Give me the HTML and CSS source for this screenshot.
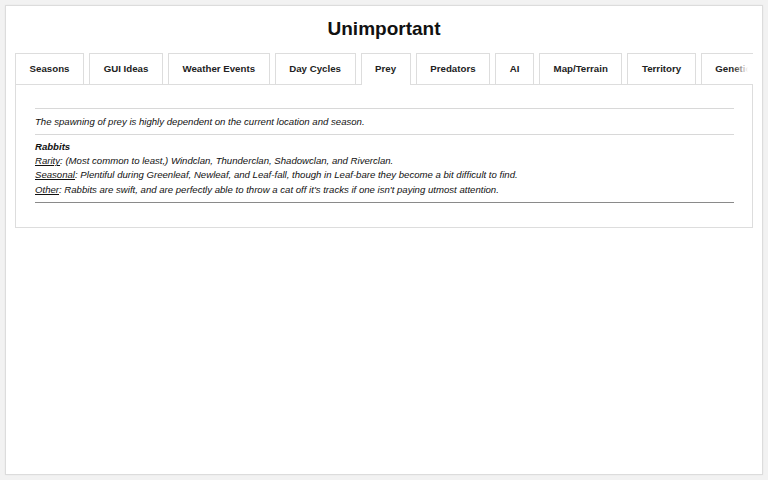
FILE: index.html
```html
<!DOCTYPE html>
<html>
<head>
 <title>Unimportant</title>
 <link rel="stylesheet" href="styles.css">
</head>
<body>
 <div class="page">
 <h1>Unimportant</h1>
 <div class="tab-strip">
 <ul class="tabs">
 <li class="tab">Seasons</li>
 <li class="tab">GUI Ideas</li>
 <li class="tab">Weather Events</li>
 <li class="tab">Day Cycles</li>
 <li class="tab active">Prey</li>
 <li class="tab">Predators</li>
 <li class="tab">AI</li>
 <li class="tab">Map/Terrain</li>
 <li class="tab">Territory</li>
 <li class="tab">Genetics</li>
 </ul>
 <div class="fade"></div>
 </div>
 <div class="panel">
 <hr class="light">
 <p class="intro">The spawning of prey is highly dependent on the current location and season.</p>
 <hr class="light">
 <div class="entry">
 <div class="name">Rabbits</div>
 <div><u>Rarity</u>: (Most common to least,) Windclan, Thunderclan, Shadowclan, and Riverclan.</div>
 <div><u>Seasonal</u>: Plentiful during Greenleaf, Newleaf, and Leaf-fall, though in Leaf-bare they become a bit difficult to find.</div>
 <div><u>Other</u>: Rabbits are swift, and are perfectly able to throw a cat off it's tracks if one isn't paying utmost attention.</div>
 </div>
 <hr class="dark">
 </div>
 </div>
</body>
</html>
```
FILE: styles.css
```css
/* page */
body {
margin: 0;
padding: 5px;
background-color: #f2f2f2;
font-family: "Liberation Sans", Arial, sans-serif;
color: #111;
}
.page {
height: 470px;
box-sizing: border-box;
background-color: #fff;
border: 1px solid #dcdcdc;
padding: 0 9px;
box-shadow: 0 0 2px rgba(0,0,0,0.05);
}
h1 {
margin: 11px 0 12px;
font-size: 19px;
line-height: 24px;
text-align: center;
color: #111;
}
/* tabs */
.tab-strip {
position: relative;
overflow: hidden;
}
.tabs {
display: flex;
gap: 5px;
margin: 0;
padding: 0;
list-style: none;
}
.tab {
flex-shrink: 0;
height: 31px;
box-sizing: border-box;
padding: 0 13.6px;
border: 1px solid #ddd;
border-bottom: none;
font-size: 9.7px;
font-weight: bold;
line-height: 30px;
color: #222;
background-color: #fff;
}
.tab.active {
height: 32px;
position: relative;
z-index: 1;
}
.fade {
position: absolute;
top: 1px;
right: 0;
width: 20px;
height: 29px;
background: linear-gradient(to right, rgba(255,255,255,0), #fff 75%);
z-index: 2;
}
/* content */
.panel {
margin-top: -1px;
border: 1px solid #ddd;
padding: 23px 18px 24px 19px;
font-size: 9.6px;
font-style: italic;
}
hr {
margin: 0;
border: none;
height: 1px;
}
hr.light {
background-color: #d8d8d8;
}
hr.dark {
background-color: #8a8a8a;
}
.intro {
margin: 6px 0 5px;
line-height: 14px;
}
.entry {
margin: 5px 0;
line-height: 14.2px;
}
.name {
font-weight: bold;
}
```
